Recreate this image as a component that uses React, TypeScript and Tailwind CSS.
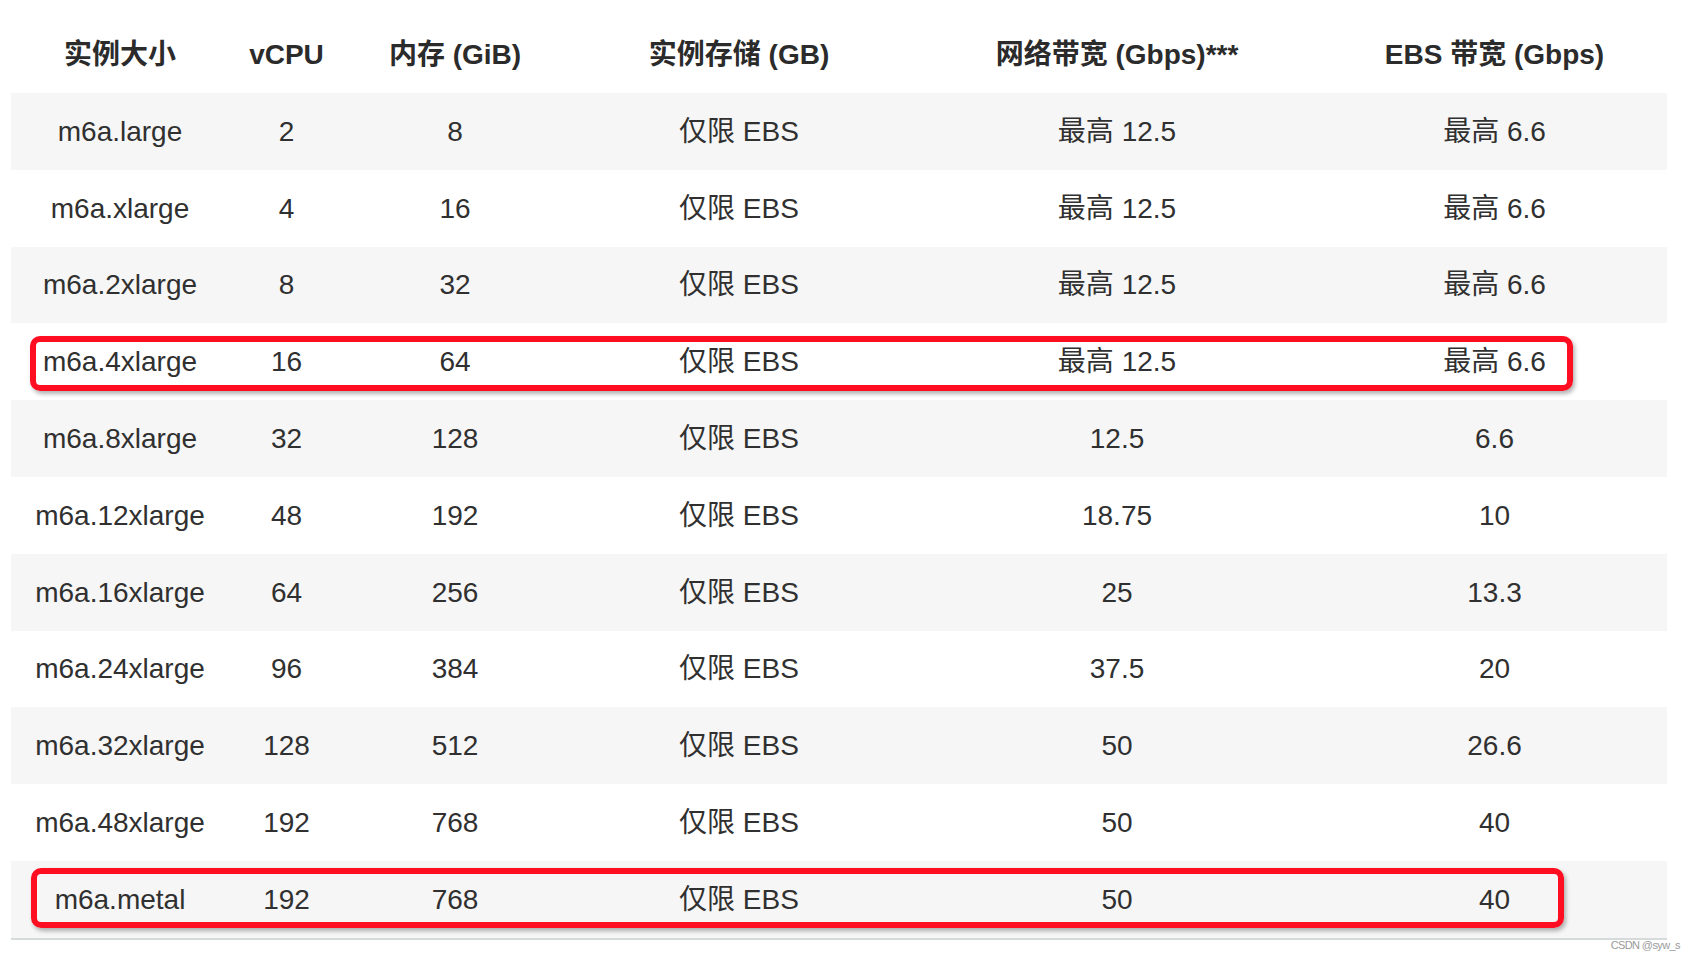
import React from "react";

const font = {
  fontFamily: '"Liberation Sans", "Noto Sans CJK SC", sans-serif',
};

const headers = ["实例大小", "vCPU", "内存 (GiB)", "实例存储 (GB)", "网络带宽 (Gbps)***", "EBS 带宽 (Gbps)"];

const rows = [
  ["m6a.large", "2", "8", "仅限 EBS", "最高 12.5", "最高 6.6"],
  ["m6a.xlarge", "4", "16", "仅限 EBS", "最高 12.5", "最高 6.6"],
  ["m6a.2xlarge", "8", "32", "仅限 EBS", "最高 12.5", "最高 6.6"],
  ["m6a.4xlarge", "16", "64", "仅限 EBS", "最高 12.5", "最高 6.6"],
  ["m6a.8xlarge", "32", "128", "仅限 EBS", "12.5", "6.6"],
  ["m6a.12xlarge", "48", "192", "仅限 EBS", "18.75", "10"],
  ["m6a.16xlarge", "64", "256", "仅限 EBS", "25", "13.3"],
  ["m6a.24xlarge", "96", "384", "仅限 EBS", "37.5", "20"],
  ["m6a.32xlarge", "128", "512", "仅限 EBS", "50", "26.6"],
  ["m6a.48xlarge", "192", "768", "仅限 EBS", "50", "40"],
  ["m6a.metal", "192", "768", "仅限 EBS", "50", "40"],
];

const cols = "grid grid-cols-[218px_115px_222px_346px_410px_345px]";

function App() {
  return (
    <div className="min-h-screen bg-white pt-4 pl-[11px] text-[#303030]" style={font}>
      <div className="w-[1656px]">
        <div className={`${cols} h-[77px] items-center text-[28px] font-bold text-[#2b2b2b]`}>
          {headers.map((h) => (
            <div key={h} className="text-center whitespace-nowrap">
              {h}
            </div>
          ))}
        </div>
        <div className="border-b-2 border-[#d5dbdb]">
          {rows.map((row, i) => (
            <div
              key={row[0]}
              className={`${cols} relative h-[76.8px] items-center text-[28px] ${i % 2 === 0 ? "bg-[#f6f6f6]" : "bg-white"}`}
            >
              {row.map((cell, j) => (
                <div key={j} className="text-center whitespace-nowrap pt-px">
                  {cell}
                </div>
              ))}
              {i === 3 && (
                <div className="absolute left-[19px] top-[13px] w-[1543px] h-[55px] rounded-[10px] border-[6px] border-[#ff0d20] shadow-[2px_3px_4px_rgba(0,0,0,0.3)]" />
              )}
              {i === 10 && (
                <div className="absolute left-[20px] top-[7px] w-[1533px] h-[60px] rounded-[10px] border-[6px] border-[#ff0d20] shadow-[2px_3px_4px_rgba(0,0,0,0.3)]" />
              )}
            </div>
          ))}
        </div>
      </div>
      <div className="w-[1669px] flex justify-end">
        <span className="text-[11px] leading-none tracking-[-0.6px] text-[#9a9a9a]">CSDN @syw_s</span>
      </div>
    </div>
  );
}

export default App;
